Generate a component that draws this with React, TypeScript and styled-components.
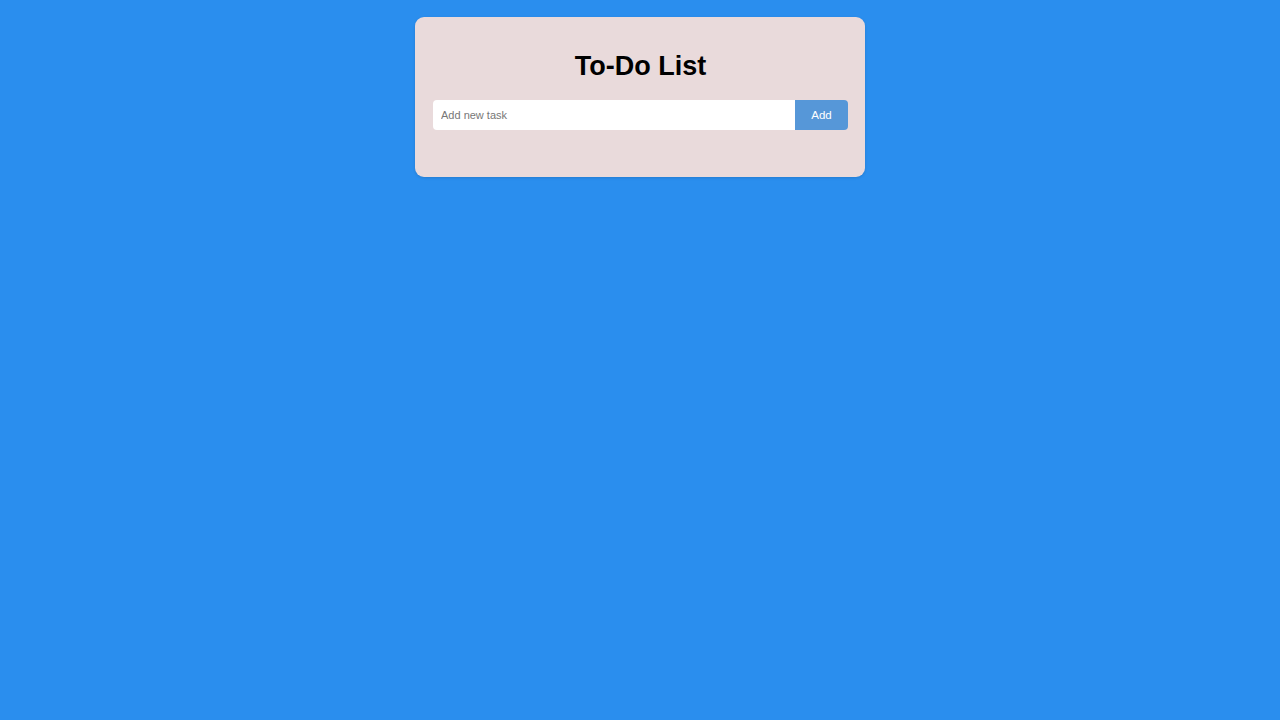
import React, { useState } from 'react';
import styled, { createGlobalStyle } from 'styled-components';

const GlobalStyle = createGlobalStyle`
  html, body {
    margin: 0;
    padding: 0;
    height: 100%;
    background-color: #2a8eee;
    font-family: "Liberation Sans", Arial, sans-serif;
  }
`;

const Page = styled.div`
  min-height: 720px;
  display: flex;
  justify-content: center;
  align-items: flex-start;
  padding-top: 17px;
  box-sizing: border-box;
`;

const Card = styled.div`
  width: 450px;
  height: 160px;
  box-sizing: border-box;
  padding: 33px 17px 0 18px;
  background-color: #e9dadb;
  border-radius: 9px;
  box-shadow: 0 1px 3px rgba(0, 0, 0, 0.12);
`;

const Title = styled.h1`
  margin: 0 0 18px;
  font-size: 27px;
  line-height: 32px;
  font-weight: 700;
  color: #000;
  text-align: center;
`;

const InputRow = styled.form`
  display: flex;
  height: 30px;
`;

const TaskInput = styled.input`
  flex: 1;
  min-width: 0;
  height: 30px;
  box-sizing: border-box;
  padding: 0 8px;
  border: none;
  border-radius: 4px 0 0 4px;
  background: #fff;
  font-family: "Liberation Sans", Arial, sans-serif;
  font-size: 11px;
  color: #333;
  outline: none;

  &::placeholder {
    color: #777;
  }
`;

const AddButton = styled.button`
  width: 53px;
  height: 30px;
  padding: 0;
  border: none;
  border-radius: 0 4px 4px 0;
  background-color: #5697d8;
  color: #fff;
  font-family: "Liberation Sans", Arial, sans-serif;
  font-size: 11.5px;
  cursor: pointer;
`;

export default function App() {
  const [task, setTask] = useState('');

  return (
    <>
      <GlobalStyle />
      <Page>
        <Card>
          <Title>To-Do List</Title>
          <InputRow onSubmit={(e) => e.preventDefault()}>
            <TaskInput
              placeholder="Add new task"
              value={task}
              onChange={(e) => setTask(e.target.value)}
            />
            <AddButton type="submit">Add</AddButton>
          </InputRow>
        </Card>
      </Page>
    </>
  );
}
